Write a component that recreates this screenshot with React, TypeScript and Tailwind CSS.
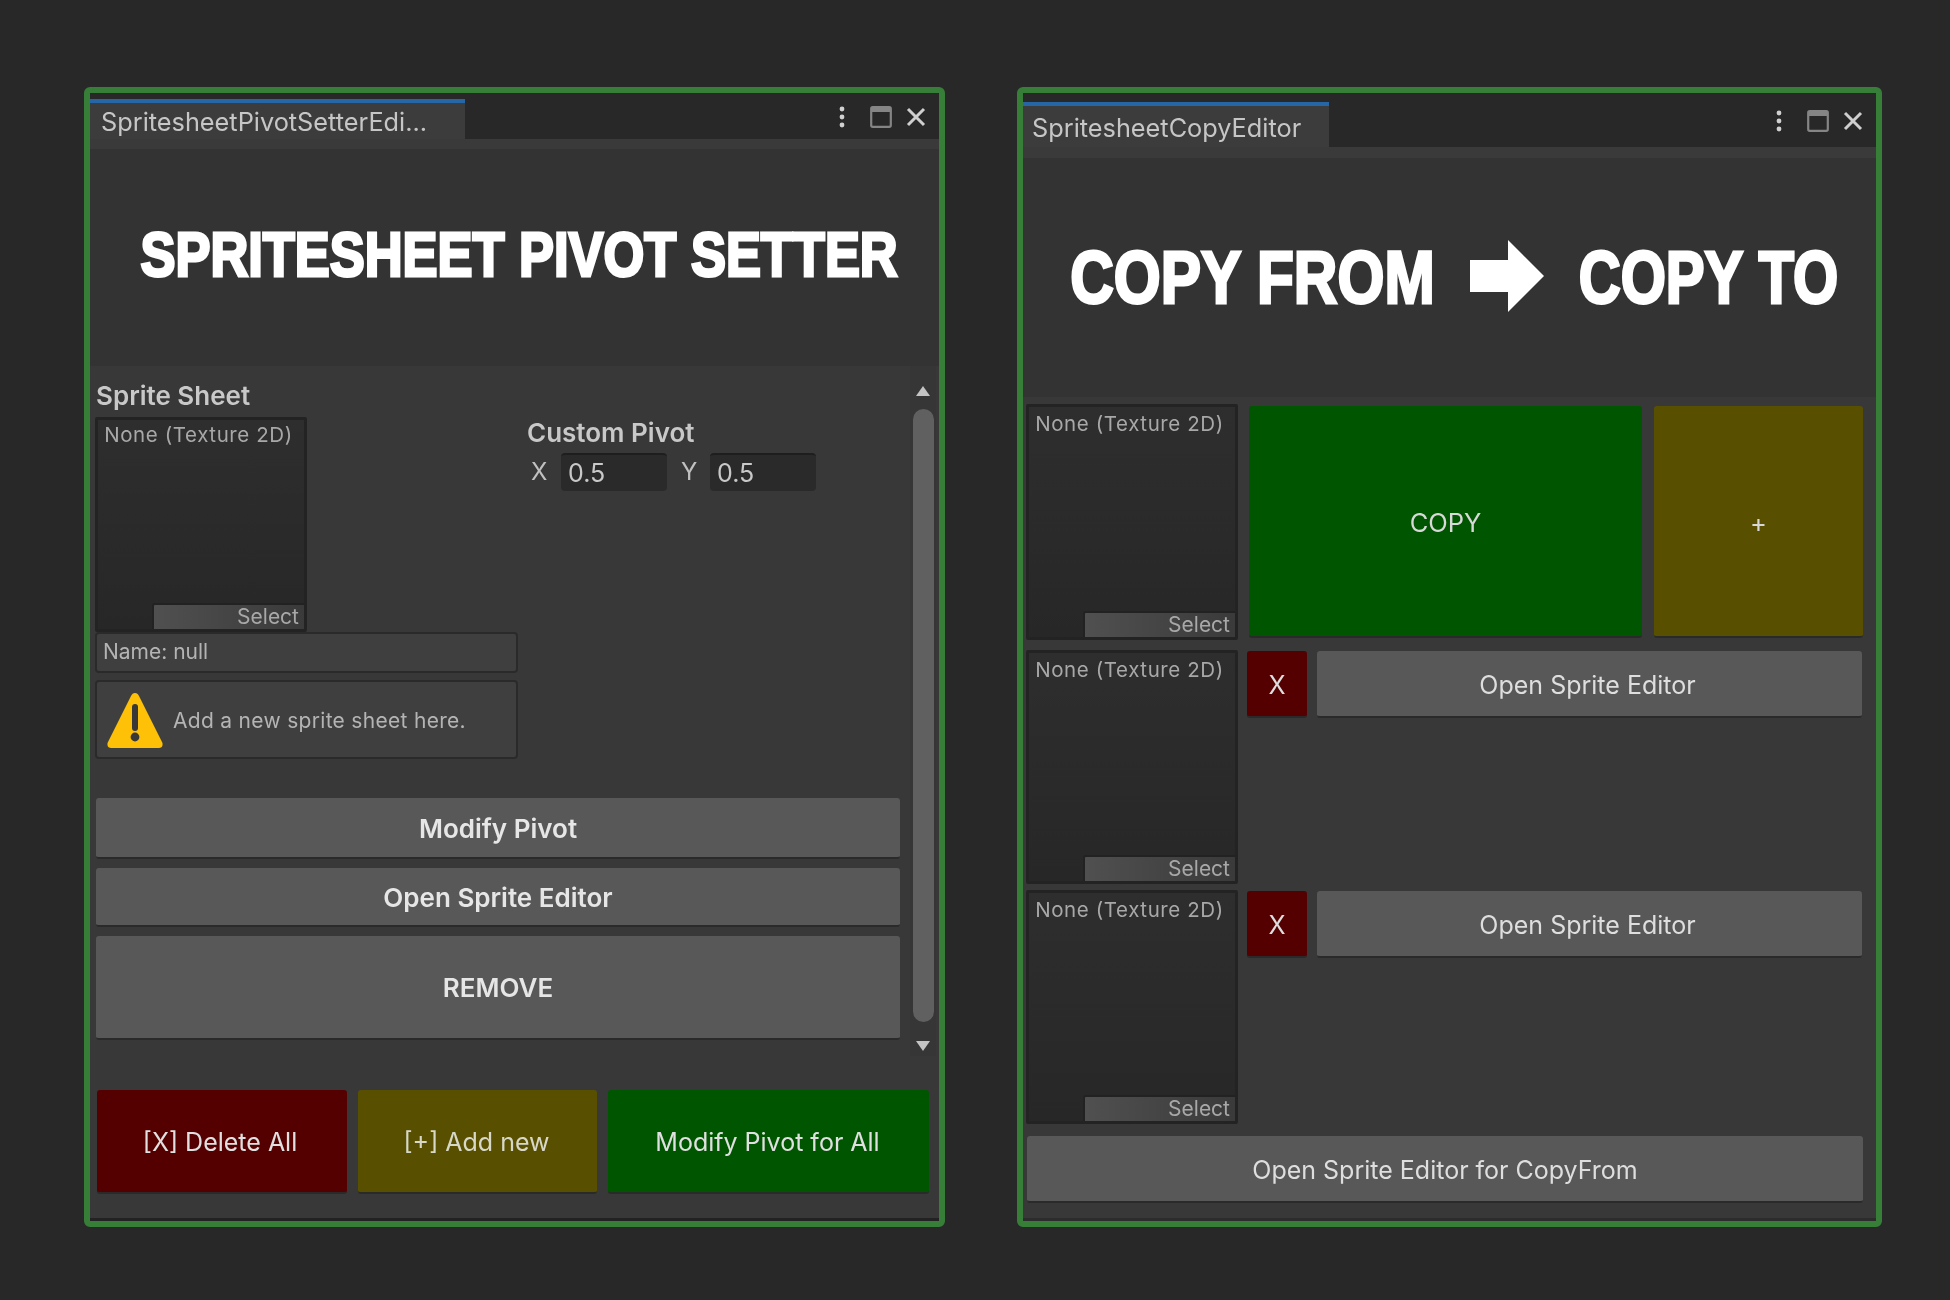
import React from "react";

const Dots = () => (
  <svg width="6" height="22" viewBox="0 0 6 22" className="shrink-0">
    <circle cx="3" cy="3" r="2.4" fill="#d0d0d0" />
    <circle cx="3" cy="11" r="2.4" fill="#d0d0d0" />
    <circle cx="3" cy="19" r="2.4" fill="#d0d0d0" />
  </svg>
);
const WindowIcon = () => (
  <svg width="22" height="22" viewBox="0 0 22 22" className="shrink-0">
    <rect x="1.2" y="1.2" width="19.6" height="19.6" rx="1.5" fill="none" stroke="#858585" strokeWidth="2.2" />
    <rect x="1" y="1" width="20" height="5" fill="#858585" />
  </svg>
);
const CloseIcon = () => (
  <svg width="20" height="20" viewBox="0 0 20 20" className="shrink-0">
    <path d="M2 2 L18 18 M18 2 L2 18" stroke="#cfcfcf" strokeWidth="3" fill="none" />
  </svg>
);
const Warn = () => (
  <svg width="58" height="58" viewBox="0 0 58 58" className="shrink-0">
    <path d="M29 2 C31 2 32 3 33 5 L56 51 C57.5 54 56 57 53 57 L5 57 C2 57 0.5 54 2 51 L25 5 C26 3 27 2 29 2 Z" fill="#ffc107" />
    <path d="M29 16 L29 37" stroke="#383838" strokeWidth="6" strokeLinecap="round" />
    <circle cx="29" cy="46" r="4.4" fill="#383838" />
  </svg>
);
const Arrow = () => (
  <svg width="74" height="72" viewBox="0 0 74 72" className="shrink-0">
    <path d="M0 20 L38 20 L38 0 L74 36 L38 72 L38 52 L0 52 Z" fill="#ffffff" />
  </svg>
);

function TabBar({ title, tabW, barH, blueTop, tabPad, iconPad }: { title: string; tabW: string; barH: string; blueTop: string; tabPad: string; iconPad: string }) {
  return (
    <div className={`flex shrink-0 bg-[#282828] ${barH} ${blueTop}`}>
      <div className={`flex h-full items-start border-t-[4px] border-[#2766a6] bg-[#3c3c3c] ${tabW} ${tabPad}`}>
        <span className="whitespace-nowrap text-[25.3px] leading-[34px] text-[#c6c6c6]">{title}</span>
      </div>
      <div className={`ml-auto flex items-center pr-[13px] ${iconPad}`}>
        <Dots />
        <span className="ml-[25px] flex"><WindowIcon /></span>
        <span className="ml-[14px] flex"><CloseIcon /></span>
      </div>
    </div>
  );
}

function ObjectField({ h, topPad }: { h: string; topPad: string }) {
  return (
    <div className={`relative w-[212px] shrink-0 rounded-[2px] border-[3px] border-[#232323] bg-gradient-to-b from-[#2e2e2e] to-[#272727] ${h}`}>
      <div className={`pr-[5px] text-center whitespace-nowrap text-[20.5px] leading-[26px] tracking-[0.6px] text-[#a8a8a8] ${topPad}`}>None (Texture 2D)</div>
      <div className="absolute bottom-0 right-0 flex h-[26px] w-[152px] items-center justify-end rounded-tl-[3px] border-l-2 border-t-2 border-[#222222] bg-gradient-to-r from-[#505050] to-[#3a3a3a] pr-[5px] text-[21px] text-[#a8a8a8]">
        Select
      </div>
    </div>
  );
}

function Btn({ className, children }: { className: string; children: React.ReactNode }) {
  return (
    <div className={`flex items-center justify-center rounded-[3px] border-b-2 border-[#2a2a2a] ${className}`}>{children}</div>
  );
}

export default function App() {
  return (
    <div className="flex h-[1300px] w-[1950px] items-start gap-[72px] overflow-hidden bg-[#282828] pl-[84px] pt-[87px] blur-[0.7px]" style={{ fontFamily: "Inter, 'Liberation Sans', sans-serif" }}>
      {/* Left window */}
      <div className="flex h-[1140px] w-[861px] shrink-0 flex-col rounded-[6px] border-[6px] border-[#377e38] bg-[#383838]">
        <TabBar title="SpritesheetPivotSetterEdi..." tabW="w-[375px]" barH="h-[46px]" blueTop="pt-[6px]" tabPad="pl-[11px] pt-[2px]" iconPad="pb-[5px]" />
        <div className="flex h-[227px] shrink-0 items-center justify-center border-t-[10px] border-[#3a3a3a] bg-[#333333] pb-[7px] pl-[9px]">
          <span className="scale-x-[0.832] whitespace-nowrap text-[63px] font-bold leading-none text-white [-webkit-text-stroke:3px_white]" style={{ fontFamily: "'Liberation Sans', sans-serif" }}>
            SPRITESHEET PIVOT SETTER
          </span>
        </div>

        <div className="flex h-[691px] shrink-0">
          <div className="w-[810px] shrink-0 pl-[5px]">
            <div className="flex">
              <div className="flex w-[432px] shrink-0 flex-col">
                <div className="h-[51px] pl-[1px] pt-[15px] text-[26px] font-semibold leading-[30px] text-[#c8c8c8]">Sprite Sheet</div>
                <ObjectField h="h-[215px]" topPad="pt-[2px]" />
                <div className="flex h-[41px] w-[423px] items-center rounded-[4px] border-2 border-[#2a2a2a] bg-[#3f3f3f] pb-[2px] pl-[6px] text-[21px] text-[#b4b4b4]">Name: null</div>
                <div className="mt-[7px] flex h-[79px] w-[423px] items-center gap-[9px] rounded-[4px] border-2 border-[#2a2a2a] bg-[#3f3f3f] pl-[9px] text-[21px] tracking-[0.3px] text-[#b4b4b4]">
                  <Warn />
                  <span className="pt-[2px]">Add a new sprite sheet here.</span>
                </div>
              </div>
              <div className="flex flex-col pt-[52px]">
                <div className="text-[26px] font-semibold leading-[30px] text-[#c8c8c8]">Custom Pivot</div>
                <div className="mt-[5px] flex items-center text-[24px] text-[#c0c0c0]">
                  <span className="w-[34px] pl-[4px]">X</span>
                  <div className="flex h-[38px] w-[106px] items-center rounded-[4px] border-t-2 border-[#1e1e1e] bg-[#2a2a2a] pl-[7px] pt-[2px] text-[25px] text-[#c8c8c8]">0.5</div>
                  <span className="w-[43px] pl-[14px]">Y</span>
                  <div className="flex h-[38px] w-[106px] items-center rounded-[4px] border-t-2 border-[#1e1e1e] bg-[#2a2a2a] pl-[7px] pt-[2px] text-[25px] text-[#c8c8c8]">0.5</div>
                </div>
              </div>
            </div>
            <div className="ml-[1px] mt-[39px] flex w-[804px] flex-col gap-[9px] text-[26px] font-semibold text-[#e6e6e6]">
              <Btn className="h-[61px] bg-[#585858] pt-[1px]">Modify Pivot</Btn>
              <Btn className="h-[59px] bg-[#585858] pt-[1px]">Open Sprite Editor</Btn>
              <Btn className="h-[104px] bg-[#585858] pt-[1px]">REMOVE</Btn>
            </div>
          </div>
          <div className="ml-[10px] flex h-[690px] w-[26px] flex-col items-center bg-[#363636] pt-[19px]">
            <svg width="16" height="12" viewBox="0 0 16 12" className="shrink-0"><path d="M8 1 L15 11 L1 11 Z" fill="#c4c4c4" /></svg>
            <div className="mt-[12px] h-[613px] w-[21px] rounded-full bg-[#606060]" />
            <svg width="16" height="12" viewBox="0 0 16 12" className="mt-[18px] shrink-0"><path d="M1 1 L15 1 L8 11 Z" fill="#c4c4c4" /></svg>
          </div>
        </div>

        <div className="mt-[33px] flex gap-[11px] pl-[7px] text-[25px] text-[#e0e0e0]">
          <Btn className="h-[104px] w-[250px] bg-[#550000] pr-[4px] pt-[3px]">[X] Delete All</Btn>
          <Btn className="h-[104px] w-[239px] bg-[#585000] pr-[2px] pt-[3px] text-[#d8d8c8]">[+] Add new</Btn>
          <Btn className="h-[104px] w-[321px] bg-[#005500] pr-[2px] pt-[3px]">Modify Pivot for All</Btn>
        </div>
        <div className="mt-auto h-[3px] shrink-0 bg-[#222222]" />
      </div>

      {/* Right window */}
      <div className="flex h-[1140px] w-[865px] shrink-0 flex-col rounded-[6px] border-[6px] border-[#377e38] bg-[#383838]">
        <TabBar title="SpritesheetCopyEditor" tabW="w-[306px]" barH="h-[54px]" blueTop="pt-[9px]" tabPad="pl-[9px] pt-[5px]" iconPad="pb-[8px]" />
        <div className="flex h-[250px] shrink-0 items-center border-t-[11px] border-[#3a3a3a] bg-[#333333] pl-[48px]">
          <span className="flex w-[363px] shrink-0 justify-center">
            <span className="scale-x-[0.805] whitespace-nowrap text-[75px] font-bold leading-none text-white [-webkit-text-stroke:3px_white]" style={{ fontFamily: "'Liberation Sans', sans-serif" }}>COPY FROM</span>
          </span>
          <span className="ml-[36px] flex shrink-0 pb-[4px]"><Arrow /></span>
          <span className="ml-[35px] flex w-[259px] shrink-0 justify-center">
            <span className="scale-x-[0.775] whitespace-nowrap text-[75px] font-bold leading-none text-white [-webkit-text-stroke:3px_white]" style={{ fontFamily: "'Liberation Sans', sans-serif" }}>COPY TO</span>
          </span>
        </div>
        <div className="flex flex-1 flex-col pl-[3px] pt-[7px]">
          <div className="flex h-[236px] shrink-0">
            <ObjectField h="h-[236px]" topPad="pt-[4px]" />
            <div className="ml-[11px] mt-[2px] flex gap-[12px] text-[25.5px] text-[#d8d8d8]">
              <Btn className="h-[232px] w-[393px] bg-[#005500] pt-[4px]">COPY</Btn>
              <Btn className="h-[232px] w-[209px] bg-[#585000] pt-[4px]">+</Btn>
            </div>
          </div>
          {[0, 1].map((i) => (
            <div key={i} className={`flex h-[234px] shrink-0 ${i === 0 ? "mt-[10px]" : "mt-[6px]"}`}>
              <ObjectField h="h-[234px]" topPad="pt-[4px]" />
              <div className="ml-[9px] mt-[1px] flex gap-[10px] text-[25px] text-[#dedede]">
                <Btn className="h-[67px] w-[60px] bg-[#550000] pt-[4px]">X</Btn>
                <Btn className="h-[67px] w-[545px] bg-[#585858] pr-[4px] pt-[4px]">Open Sprite Editor</Btn>
              </div>
            </div>
          ))}
          <Btn className="ml-[1px] mt-[12px] h-[67px] w-[836px] shrink-0 bg-[#585858] pt-[5px] text-[25px] text-[#dedede]">Open Sprite Editor for CopyFrom</Btn>
        </div>
        <div className="mt-auto h-[3px] shrink-0 bg-[#2c2c2c]" />
      </div>
    </div>
  );
}
